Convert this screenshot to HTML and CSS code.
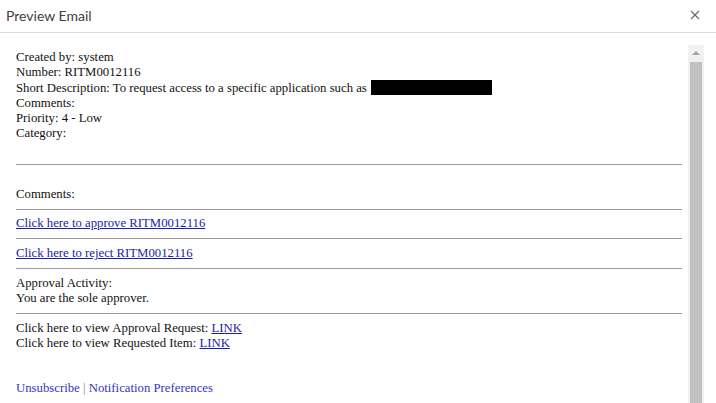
FILE: index.html
```html
<!DOCTYPE html>
<html>
<head>
<meta charset="utf-8">
<link rel="stylesheet" href="styles.css">
</head>
<body>
<div class="modal">
  <div class="modal-header">
    <div class="title">Preview Email</div>
    <svg class="close" width="10" height="10" viewBox="0 0 10 10"><path d="M1 1L9 9M9 1L1 9" stroke="#666" stroke-width="1.1" fill="none"/></svg>
  </div>
  <div class="modal-body">
    <div class="email">
      <div class="block first">
        <div>Created by: system</div>
        <div>Number: RITM0012116</div>
        <div>Short Description: To request access to a specific application such as <span class="redact"></span></div>
        <div>Comments:</div>
        <div>Priority: 4 - Low</div>
        <div>Category:</div>
      </div>
      <div class="rule big"></div>
      <div class="block after-big">Comments:</div>
      <div class="rule"></div>
      <div class="block tight"><a href="#" class="link">Click here to approve RITM0012116</a></div>
      <div class="rule"></div>
      <div class="block"><a href="#" class="link">Click here to reject RITM0012116</a></div>
      <div class="rule"></div>
      <div class="block">
        <div>Approval Activity:</div>
        <div>You are the sole approver.</div>
      </div>
      <div class="rule"></div>
      <div class="block">
        <div>Click here to view Approval Request: <a href="#" class="link">LINK</a></div>
        <div>Click here to view Requested Item: <a href="#" class="link">LINK</a></div>
      </div>
      <div class="footer"><a href="#" class="foot">Unsubscribe</a><span class="pipe"> | </span><a href="#" class="foot">Notification Preferences</a></div>
    </div>
    <div class="scrollbar">
      <div class="arrow"></div>
      <div class="thumb"></div>
    </div>
  </div>
</div>
</body>
</html>
```

FILE: styles.css
```css
html, body {
  margin: 0;
  padding: 0;
  background: #fff;
  width: 716px;
  height: 403px;
  overflow: hidden;
}
.modal {
  display: flex;
  flex-direction: column;
  height: 403px;
}
.modal-header {
  height: 32px;
  border-bottom: 1px solid #dcdcdc;
  display: flex;
  align-items: center;
  justify-content: space-between;
  padding: 0 16px 0 6px;
  box-sizing: content-box;
}
.title {
  font-family: Lato, "Open Sans", sans-serif;
  font-size: 14px;
  color: #404040;
  padding-bottom: 1px;
}
.close {
  display: block;
  margin-bottom: 3px;
}
.modal-body {
  flex: 1;
  display: flex;
  padding-left: 16px;
  overflow: hidden;
}
.email {
  width: 666px;
  font-family: "Liberation Serif", "Times New Roman", serif;
  font-size: 12.75px;
  line-height: 15px;
  color: #111;
}
.block {
  padding-top: 7px;
}
.block.tight {
  padding-top: 6px;
}
.block.first {
  padding-top: 17px;
}
.block.after-big {
  padding-top: 22px;
}
.rule {
  height: 1px;
  background: #9c9c9c;
  margin-top: 7px;
}
.rule.big {
  margin-top: 23px;
}
.redact {
  display: inline-block;
  width: 121px;
  height: 15px;
  background: #000;
  vertical-align: -3px;
  margin-left: 1px;
}
.link {
  color: #1c1ca6;
  text-decoration: underline;
}
.footer {
  padding-top: 30px;
}
.foot {
  color: #3535c4;
  text-decoration: none;
}
.pipe {
  color: #888;
}
.scrollbar {
  margin-left: 6px;
  margin-top: 12px;
  width: 16px;
  background: #f1f1f1;
  display: flex;
  flex-direction: column;
  align-items: center;
}
.arrow {
  width: 0;
  height: 0;
  border-left: 4px solid transparent;
  border-right: 4px solid transparent;
  border-bottom: 4px solid #a3a3a3;
  margin-top: 6px;
  margin-bottom: 7px;
}
.thumb {
  width: 12px;
  flex: 1;
  background: #c1c1c1;
}
```
